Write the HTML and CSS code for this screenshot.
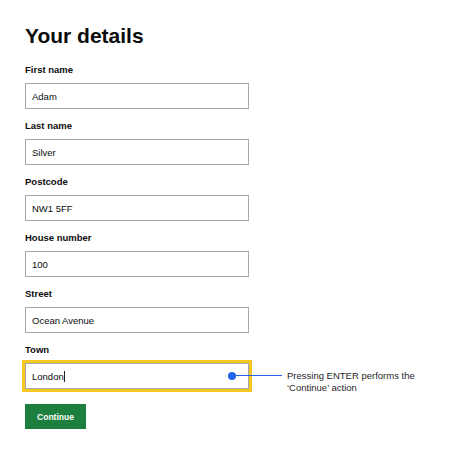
FILE: index.html
```html
<!DOCTYPE html>
<html lang="en">
<head>
<meta charset="utf-8">
<title>Your details</title>
<link rel="stylesheet" href="styles.css">
</head>
<body>
<main class="page">
  <h1 class="title">Your details</h1>
  <form class="form">
    <div class="field">
      <label class="label">First name</label>
      <div class="input">Adam</div>
    </div>
    <div class="field">
      <label class="label">Last name</label>
      <div class="input">Silver</div>
    </div>
    <div class="field">
      <label class="label">Postcode</label>
      <div class="input">NW1 5FF</div>
    </div>
    <div class="field">
      <label class="label">House number</label>
      <div class="input">100</div>
    </div>
    <div class="field">
      <label class="label">Street</label>
      <div class="input">Ocean Avenue</div>
    </div>
    <div class="field field-last">
      <label class="label">Town</label>
      <div class="town-row">
        <div class="input input-focus">London<span class="caret"></span>
          <span class="pointer"><span class="dot"></span><span class="line"></span></span>
        </div>
        <p class="callout">Pressing ENTER performs the<br>‘Continue’ action</p>
      </div>
    </div>
    <button type="button" class="button">Continue</button>
  </form>
</main>
</body>
</html>
```
FILE: styles.css
```css
html, body {
  margin: 0;
  padding: 0;
  background: #ffffff;
}

body {
  font-family: "Liberation Sans", Arial, Helvetica, sans-serif;
  color: #0b0c0c;
}

.page {
  padding: 23px 25px 0 25px;
}

.title {
  margin: 0 0 15px 0;
  font-size: 21px;
  line-height: 26px;
  font-weight: 700;
}

.form {
  margin: 0;
}

.field {
  margin-bottom: 11px;
}

.field-last {
  margin-bottom: 15px;
}

.label {
  display: block;
  font-size: 9.5px;
  line-height: 12px;
  font-weight: 700;
  margin-bottom: 7px;
}

.input {
  box-sizing: border-box;
  width: 224px;
  height: 26px;
  border: 1.5px solid #a3a7ac;
  padding: 0 6px;
  font-size: 9.5px;
  line-height: 23px;
  color: #0b0c0c;
  display: flex;
  align-items: center;
}

.town-row {
  display: flex;
  align-items: flex-start;
  height: 26px;
}

.input-focus {
  position: relative;
  box-shadow: 0 0 0 3px #f4c81f;
  flex: none;
}

.caret {
  display: inline-block;
  width: 1px;
  height: 11px;
  background: #222;
  margin-left: 0.5px;
}

.pointer {
  position: absolute;
  left: 202px;
  top: 7.5px;
  width: 54px;
  height: 8px;
  display: flex;
  align-items: center;
}

.dot {
  width: 8px;
  height: 8px;
  border-radius: 50%;
  background: #2563eb;
  flex: none;
}

.line {
  flex: 1;
  height: 1px;
  background: #2563eb;
}

.callout {
  margin: 7px 0 0 38px;
  font-size: 9.5px;
  line-height: 11.5px;
  color: #1f1f1f;
  white-space: nowrap;
}

.button {
  display: block;
  width: 61px;
  height: 25px;
  padding: 0;
  border: none;
  border-radius: 0;
  background: #1d7f3e;
  color: #ffffff;
  font-family: "Liberation Sans", Arial, Helvetica, sans-serif;
  font-size: 8.5px;
  font-weight: 700;
  cursor: pointer;
}
```
